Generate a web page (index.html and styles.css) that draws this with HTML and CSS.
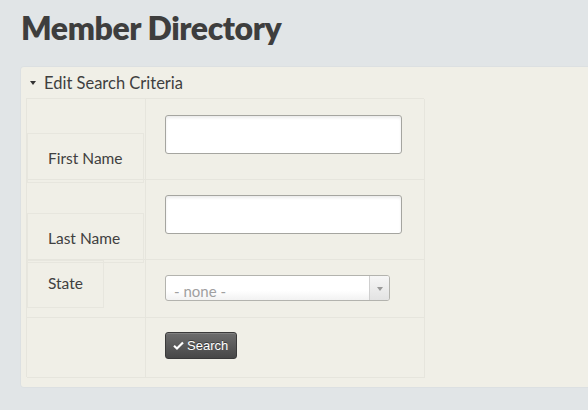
FILE: index.html
```html
<!DOCTYPE html>
<html>
<head>
<meta charset="utf-8">
<link rel="stylesheet" href="styles.css">
</head>
<body>
<h1 class="title">Member Directory</h1>
<section class="panel">
  <div class="panel-head"><span class="caret"></span>Edit Search Criteria</div>
  <div class="grid">
    <div class="cell lab r1"><label class="lbl">First Name</label></div>
    <div class="cell fld r1"><input class="txt" type="text"></div>
    <div class="cell lab r2"><label class="lbl">Last Name</label></div>
    <div class="cell fld r2"><input class="txt" type="text"></div>
    <div class="cell lab r3"><label class="lbl lbl-short">State</label></div>
    <div class="cell fld r3">
      <div class="sel"><span class="sel-text">- none -</span><span class="sel-arrow"></span></div>
    </div>
    <div class="cell lab r4"></div>
    <div class="cell fld r4">
      <button class="btn" type="button"><svg class="chk" viewBox="0 0 12 10" width="11" height="9"><path d="M1 5.2 L4.3 8.3 L11 1.6" fill="none" stroke="#fff" stroke-width="2.4"/></svg>Search</button>
    </div>
  </div>
</section>
</body>
</html>
```
FILE: styles.css
```css
html, body { margin: 0; padding: 0; }
body {
  background: #e1e5e7;
  font-family: "Lato", "Open Sans", sans-serif;
  color: #444;
  overflow: hidden;
  width: 588px;
  height: 410px;
  padding: 9px 0 0 21px;
  box-sizing: border-box;
}
.title {
  margin: 0;
  font-size: 32px;
  line-height: 38px;
  font-weight: 800;
  color: #3e3e3e;
  letter-spacing: -0.4px;
}
.panel {
  margin-top: 20px;
  width: 567px;
  box-sizing: border-box;
  background: #f0efe7;
  border-radius: 3px 0 0 3px;
  box-shadow: 0 0 0 1px rgba(0,0,0,0.02);
  padding: 0 0 10px 5px;
}
.panel-head {
  height: 31px;
  display: flex;
  align-items: center;
  font-size: 16.5px;
  color: #3f3f3f;
  padding-left: 4px;
}
.caret {
  width: 0; height: 0;
  border-left: 3.5px solid transparent;
  border-right: 3.5px solid transparent;
  border-top: 4px solid #333;
  margin-right: 8px;
  margin-top: 1px;
}
.grid {
  display: grid;
  width: 398px;
  grid-template-columns: 119px 279px;
  grid-template-rows: 81px 80px 58px 60px;
  border: 1px solid #e6e5dd;
  border-right: 0; border-bottom: 0;
  box-sizing: border-box;
  height: 279px;
}
.cell {
  border-right: 1px solid #e6e5dd;
  border-bottom: 1px solid #e6e5dd;
  box-sizing: border-box;
  min-height: 0;
}
.fld { padding-left: 19px; }
.r1.fld { padding-top: 16px; }
.r2.fld { padding-top: 15px; }
.r3.fld { padding-top: 15px; }
.r4.fld { padding-top: 14px; }
.lbl {
  display: flex;
  align-items: center;
  box-sizing: border-box;
  width: 117px;
  height: 50px;
  margin-top: 34px;
  border: 1px solid #e7e6de;
  padding-left: 20px;
  font-size: 15.5px;
  color: #404040;
}
.r2 .lbl { margin-top: 33px; }
.lbl-short {
  width: 77px;
  height: 48px;
  margin-top: 0;
  padding-bottom: 2px;
}
.txt {
  display: block;
  box-sizing: border-box;
  width: 237px;
  height: 39px;
  margin: 0;
  border: 1px solid #a5a5a0;
  border-radius: 3px;
  background: #fff;
  box-shadow: inset 0 2px 3px rgba(0,0,0,0.08);
}
.sel {
  position: relative;
  box-sizing: border-box;
  width: 225px;
  height: 26px;
  border: 1px solid #b3b3ae;
  border-radius: 3px;
  background: linear-gradient(#fff 60%, #f2f2f2);
  overflow: hidden;
}
.sel-text {
  position: absolute;
  left: 8px;
  top: 7px;
  font-size: 15px;
  line-height: 17px;
  color: #a0a0a0;
}
.sel-arrow {
  position: absolute;
  right: 0; top: 0; bottom: 0;
  width: 19px;
  border-left: 1px solid #cfcfcf;
  background: linear-gradient(#f6f6f6, #e3e3e3);
}
.sel-arrow::after {
  content: "";
  position: absolute;
  left: 7px; top: 11px;
  border-left: 3px solid transparent;
  border-right: 3px solid transparent;
  border-top: 4px solid #999;
}
.btn {
  display: flex;
  align-items: center;
  gap: 3px;
  box-sizing: border-box;
  width: 72px;
  height: 27px;
  padding: 0 0 0 7px;
  border: 1px solid #3a3a3a;
  border-radius: 3px;
  background: linear-gradient(#6d6d6d, #474747);
  color: #fff;
  font-family: "Liberation Sans", Arial, sans-serif;
  font-size: 13px;
  text-shadow: 0 -1px 0 rgba(0,0,0,0.4);
  box-shadow: inset 0 1px 0 rgba(255,255,255,0.15);
}
.chk { flex: none; }
```
